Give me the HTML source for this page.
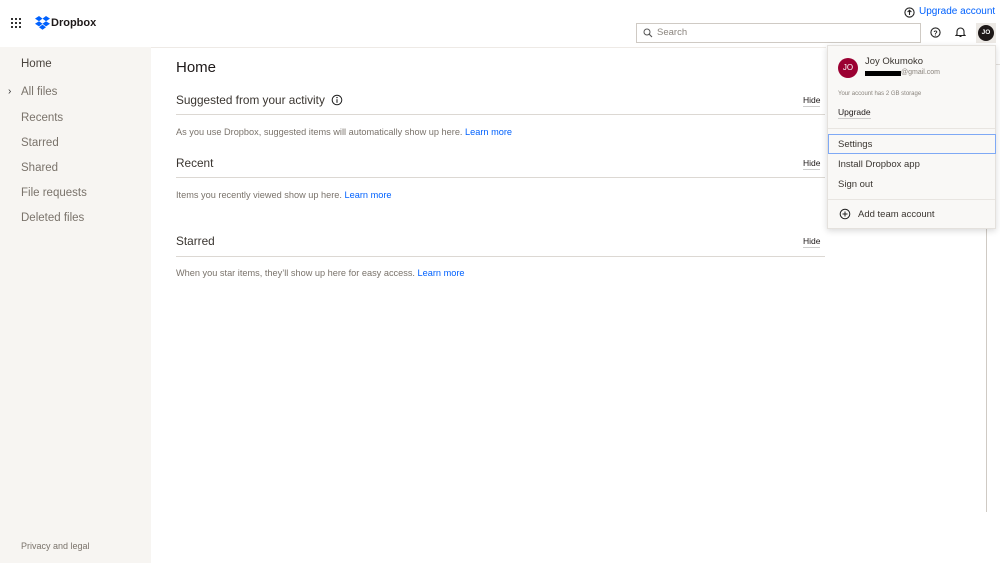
<!DOCTYPE html>
<html><head><meta charset="utf-8"><style>
*{margin:0;padding:0;box-sizing:border-box}
body{width:1000px;height:563px;overflow:hidden;background:#fff;font-family:"Liberation Sans",sans-serif;color:#1e1919;position:relative}
.a{position:absolute;white-space:nowrap}
.side{position:absolute;left:0;top:47px;width:151px;height:516px;background:#f7f5f2}
.nav{position:absolute;left:21px;font-size:11.5px;color:#7a736b}
.hr{position:absolute;left:176px;width:649px;height:1px;background:#dcd8d3}
.hide{position:absolute;left:803px;font-size:8.5px;color:#1e1919;border-bottom:1px solid #ccc;padding-bottom:1px}
.txt{position:absolute;left:176px;font-size:9.2px;color:#7a736b}
.txt span{color:#0061fe}
.h2{position:absolute;left:176px;font-size:11.8px;color:#3a3530}
.menu{position:absolute;left:827px;top:45px;width:169px;height:184px;background:#f9f8f6;border:1px solid #e4e1dd;box-shadow:0 2px 6px rgba(0,0,0,.15)}
.mi{position:absolute;left:10px;font-size:9.5px;color:#3a3530}
</style></head><body>
<svg class="a" style="left:11px;top:18px" width="10" height="10"><g fill="#333"><rect x="0" y="0" width="2" height="2"/><rect x="4" y="0" width="2" height="2"/><rect x="8" y="0" width="2" height="2"/><rect x="0" y="4" width="2" height="2"/><rect x="4" y="4" width="2" height="2"/><rect x="8" y="4" width="2" height="2"/><rect x="0" y="8" width="2" height="2"/><rect x="4" y="8" width="2" height="2"/><rect x="8" y="8" width="2" height="2"/></g></svg>
<svg class="a" style="left:35px;top:16px" width="15" height="14" viewBox="0 0 15 14"><g fill="#0061fe"><path d="M4 0L0 2.6 4 5.2 7.5 2.6z"/><path d="M11 0L7.5 2.6 11 5.2 15 2.6z"/><path d="M0 7.8L4 10.4 7.5 7.8 4 5.2z"/><path d="M11 5.2L7.5 7.8 11 10.4 15 7.8z"/><path d="M4 11.2L7.5 13.8 11 11.2 7.5 8.6z"/></g></svg>
<div class="a" style="left:51px;top:17px;font-size:11px;font-weight:bold">Dropbox</div>

<svg class="a" style="left:904px;top:7px" width="11" height="11"><circle cx="5.5" cy="5.5" r="4.6" fill="none" stroke="#222" stroke-width="1.1"/><path d="M5.5 8V3.3M3.6 5L5.5 3.2 7.4 5" fill="none" stroke="#222" stroke-width="1.1"/></svg>
<div class="a" style="left:919px;top:6px;font-size:10px;color:#0061fe">Upgrade account</div>
<div class="a" style="left:636px;top:23px;width:285px;height:20px;border:1px solid #cfcac4;background:#fff"></div>
<svg class="a" style="left:643px;top:28px" width="10" height="10"><circle cx="4" cy="4" r="3" fill="none" stroke="#555" stroke-width="1"/><path d="M6.2 6.2L9 9" stroke="#555" stroke-width="1.1"/></svg>
<div class="a" style="left:657px;top:27px;font-size:9.5px;color:#8a847d">Search</div>
<svg class="a" style="left:930px;top:27px" width="11" height="11"><circle cx="5.5" cy="5.5" r="4.6" fill="none" stroke="#222" stroke-width="1.1"/><text x="5.5" y="8.3" font-size="7" text-anchor="middle" font-family="Liberation Sans" font-weight="bold" fill="#222">?</text></svg>
<svg class="a" style="left:955px;top:26px" width="11" height="12"><path d="M2 8.5V5.5a3.5 3.5 0 017 0v3l1 1H1z M4.5 10.5h2" fill="none" stroke="#222" stroke-width="1.1"/></svg>
<div class="a" style="left:976px;top:23px;width:20px;height:20px;background:#ece9e5"></div>
<div class="a" style="left:978px;top:25px;width:16px;height:16px;border-radius:50%;background:#1e1919;color:#fff;font-size:6.5px;font-weight:bold;text-align:center;line-height:16px">JO</div>
<div class="a" style="left:0;top:47px;width:826px;height:1px;background:#eeeae6"></div>

<div class="side"></div>
<div class="nav" style="top:58px;color:#4a443e">Home</div>
<div class="a" style="left:8px;top:86px;font-size:10px;color:#333">›</div>
<div class="nav" style="top:86px">All files</div>
<div class="nav" style="top:112px">Recents</div>
<div class="nav" style="top:137px">Starred</div>
<div class="nav" style="top:162px">Shared</div>
<div class="nav" style="top:187px">File requests</div>
<div class="nav" style="top:212px">Deleted files</div>
<div class="nav" style="top:541px;font-size:9px">Privacy and legal</div>

<div class="a" style="left:176px;top:59px;font-size:15px;color:#1e1919">Home</div>
<div class="h2" style="top:93px">Suggested from your activity</div>
<svg class="a" style="left:331px;top:94px" width="12" height="12"><circle cx="6" cy="6" r="4.8" fill="none" stroke="#222" stroke-width="1"/><path d="M6 5.2V8.8" stroke="#222" stroke-width="1.1"/><circle cx="6" cy="3.6" r=".7" fill="#222"/></svg>
<div class="hide" style="top:95px">Hide</div>
<div class="hr" style="top:114px"></div>
<div class="txt" style="top:127px">As you use Dropbox, suggested items will automatically show up here. <span>Learn more</span></div>
<div class="h2" style="top:156px">Recent</div>
<div class="hide" style="top:158px">Hide</div>
<div class="hr" style="top:177px"></div>
<div class="txt" style="top:190px">Items you recently viewed show up here. <span>Learn more</span></div>
<div class="h2" style="top:234px">Starred</div>
<div class="hide" style="top:236px">Hide</div>
<div class="hr" style="top:256px"></div>
<div class="txt" style="top:268px">When you star items, they’ll show up here for easy access. <span>Learn more</span></div>

<div class="a" style="left:986px;top:64px;width:14px;height:448px;border-left:1px solid #cfcac4;border-top:1px solid #e4e1dd;background:#fff"></div>

<div class="menu">
<div class="a" style="left:10px;top:12px;width:20px;height:20px;border-radius:50%;background:#9b0032;color:#fff;font-size:8px;text-align:center;line-height:20px">JO</div>
<div class="a" style="left:37px;top:10px;font-size:9.5px;color:#3a3530">Joy Okumoko</div>
<div class="a" style="left:37px;top:25px;width:36px;height:5px;background:#000"></div>
<div class="a" style="left:73px;top:23px;font-size:7px;color:#8a847d">@gmail.com</div>
<div class="a" style="left:10px;top:45px;font-size:6px;color:#8a847d">Your account has 2 GB storage</div>
<div class="a" style="left:10px;top:61px;font-size:8.5px;color:#1e1919;border-bottom:1px solid #ccc;padding-bottom:1px">Upgrade</div>
<div class="a" style="left:0;top:82px;width:167px;height:1px;background:#e8e5e1"></div>
<div class="a" style="left:0;top:88px;width:168px;height:20px;border:1.5px solid #7fa9f5"></div>
<div class="mi" style="top:93px">Settings</div>
<div class="mi" style="top:113px">Install Dropbox app</div>
<div class="mi" style="top:133px">Sign out</div>
<div class="a" style="left:0;top:153px;width:167px;height:1px;background:#e8e5e1"></div>
<svg class="a" style="left:11px;top:162px" width="12" height="12"><circle cx="6" cy="6" r="4.8" fill="none" stroke="#222" stroke-width="1"/><path d="M6 3.5v5M3.5 6h5" stroke="#222" stroke-width="1"/></svg>
<div class="mi" style="left:30px;top:163px">Add team account</div>
</div>
</body></html>
